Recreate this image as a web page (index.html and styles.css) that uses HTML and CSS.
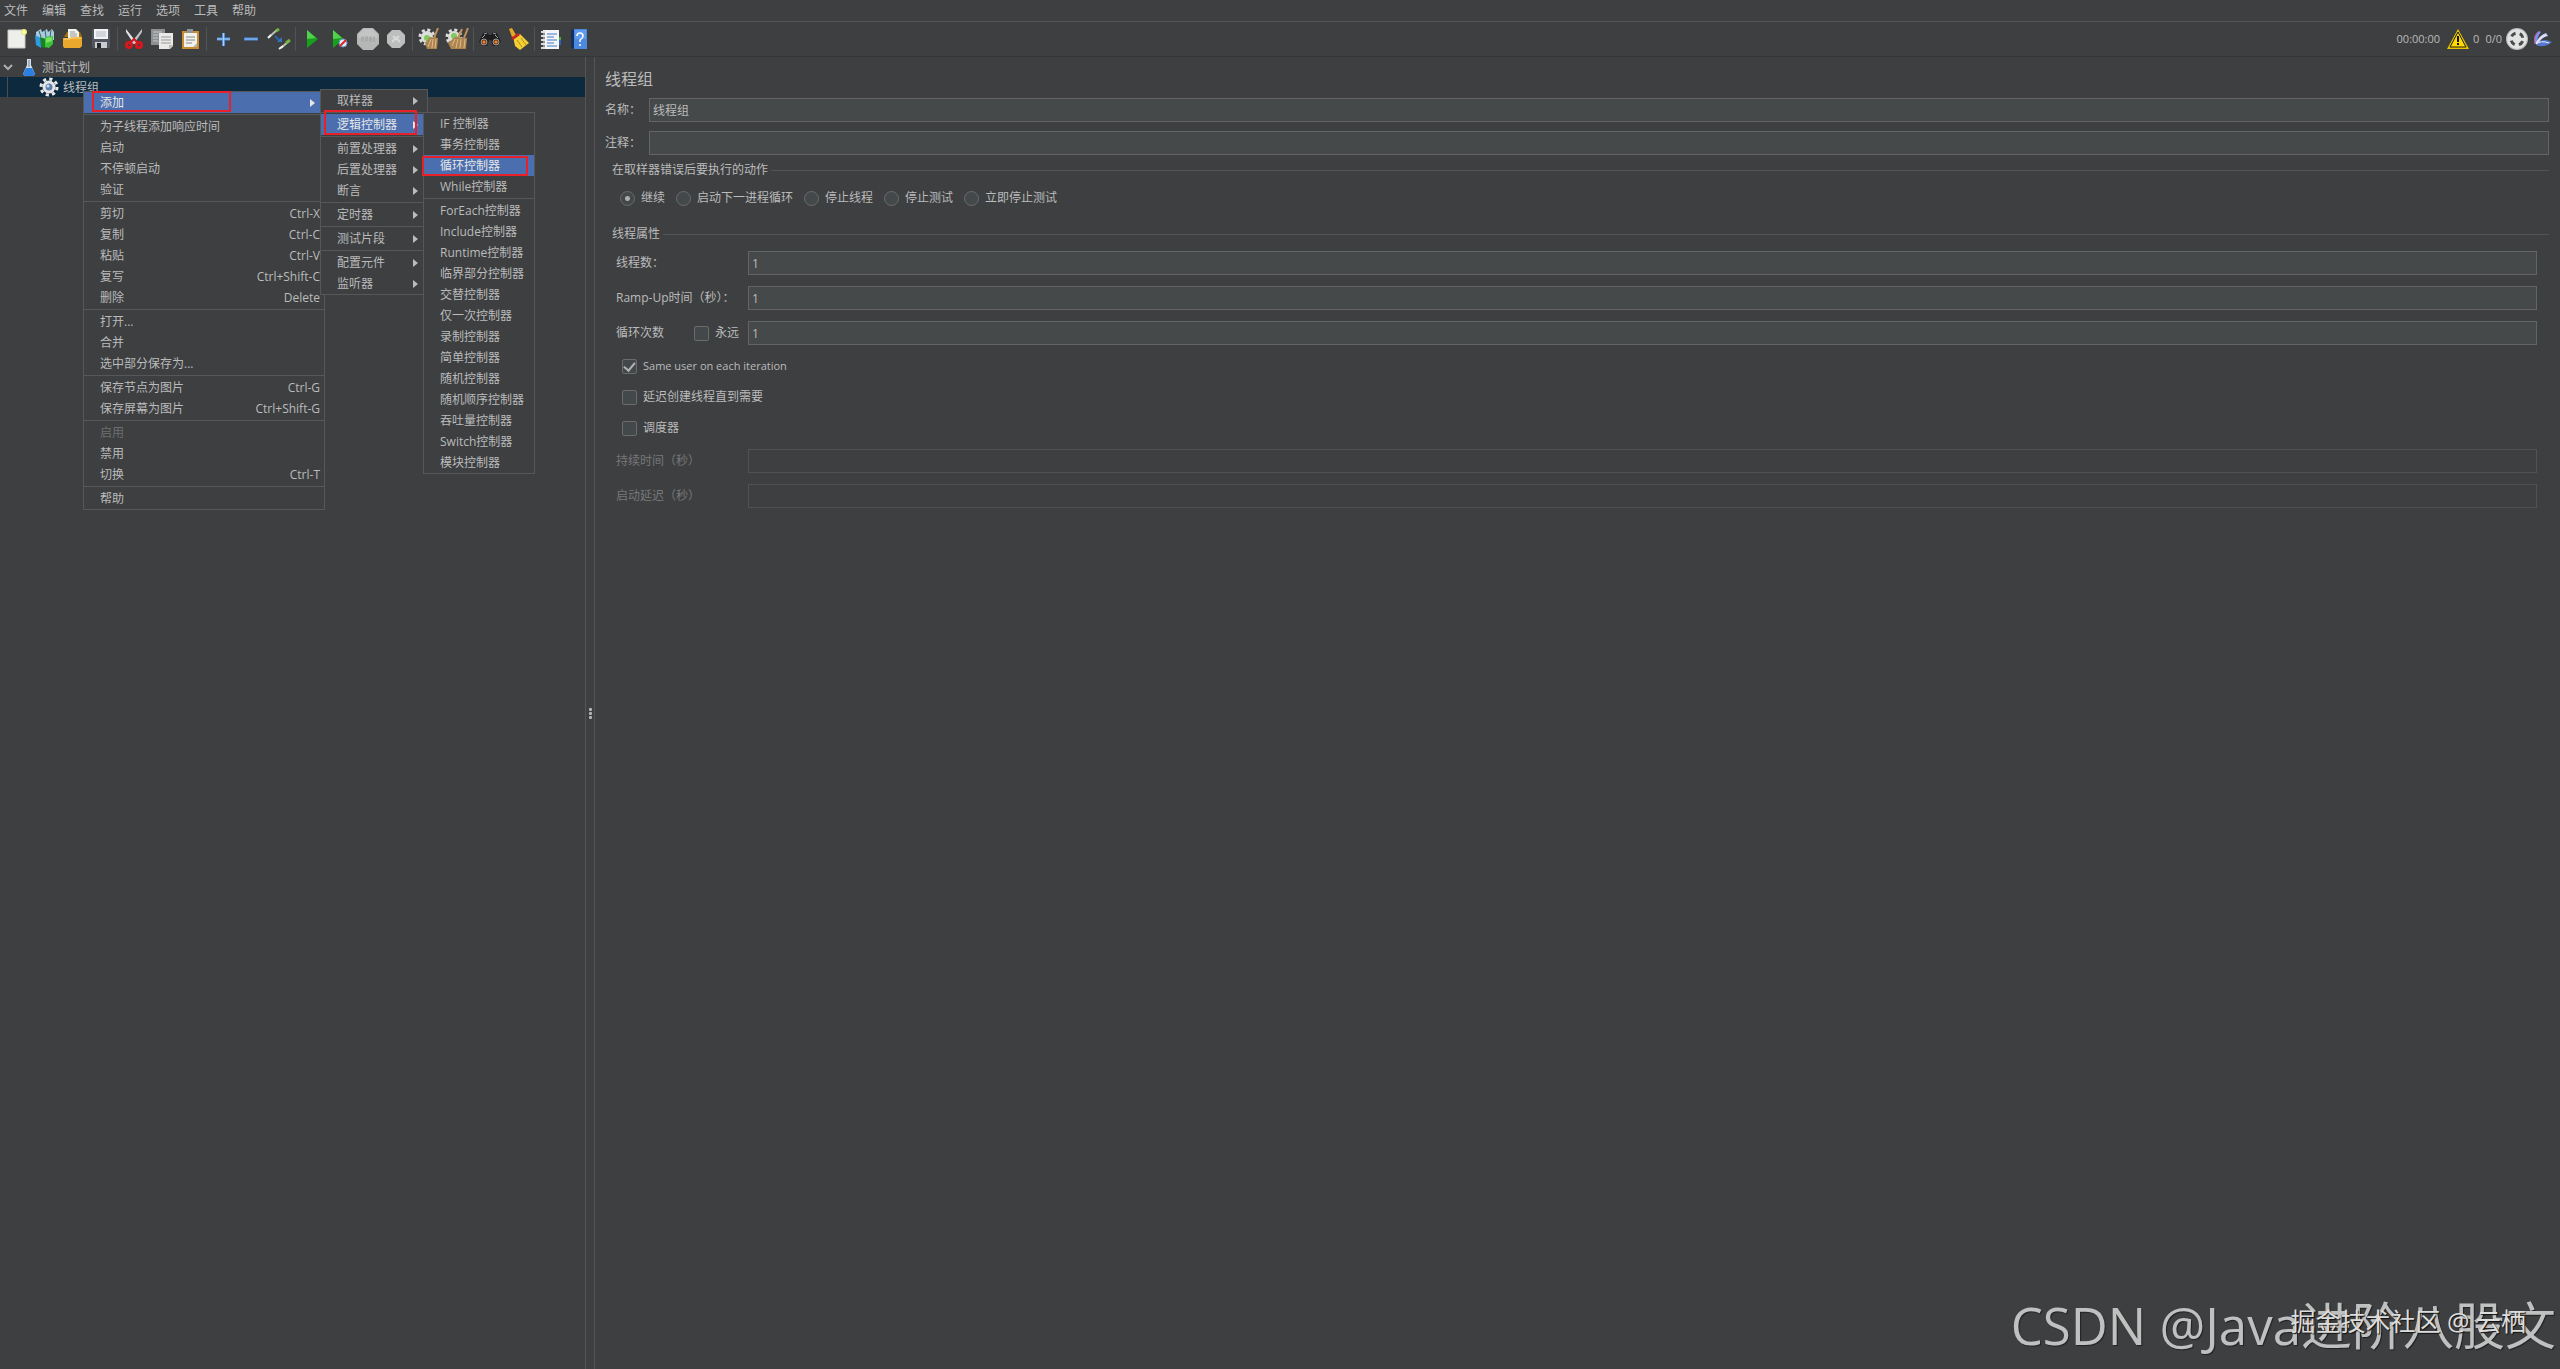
FILE: index.html
```html
<!DOCTYPE html>
<html lang="zh-CN">
<head>
    <meta charset="UTF-8">
    <title>线程组</title>
    <link rel="stylesheet" href="styles.css">
</head>
<body>
    <!-- Menu bar -->
    <nav class="menubar">
        <button>文件</button>
        <button>编辑</button>
        <button>查找</button>
        <button>运行</button>
        <button>选项</button>
        <button>工具</button>
        <button>帮助</button>
    </nav>

    <!-- Toolbar -->
    <header class="toolbar">
        <button class="tool"><svg width="22" height="22" viewBox="0 0 22 22"><path d="M2 2h17v18H2z" fill="#eeeeea" stroke="#c9c9c4"/><circle cx="18" cy="4" r="3" fill="#e6ef7c"/><circle cx="18" cy="4" r="1.5" fill="#fbffc0"/></svg></button>
        <button class="tool"><svg width="22" height="22" viewBox="0 0 22 22"><path d="M2 4l5-3 1 3 5-3 1 3 4-3 2 3v8H2z" fill="#a9cbdc"/><path d="M5 3l2 6M11 2l1 7M17 2l-1 7" stroke="#38637a"/><path d="M1 7l6 3v10l-5-3z" fill="#2e9be0"/><path d="M6 9l6 2v9l-5-1z" fill="#1b7f26"/><path d="M11 9l8-1v8l-4 4-4-1z" fill="#3cc238"/><path d="M12 10l6-1v4l-6 2z" fill="#7be45f"/></svg></button>
        <button class="tool"><svg width="22" height="22" viewBox="0 0 22 22"><path d="M2 9l3-5h13l2 5z" fill="#a8700f"/><path d="M6 1h8l3 3v7H6z" fill="#f2f2ee"/><path d="M8 4h5M8 6h7M8 8h7" stroke="#999"/><path d="M1 10h7l2-1h10v9l-2 2H2l-1-2z" fill="#eaa92c"/><path d="M2 11h6l2-1h9" stroke="#ffd677" fill="none"/></svg></button>
        <button class="tool"><svg width="22" height="22" viewBox="0 0 22 22"><path d="M2 1h18v19H3l-1-1z" fill="#52565e"/><path d="M4 1h14v10H4z" fill="#f2f3f5"/><path d="M6 4h10M6 6h10M6 8h10" stroke="#b6b9c0"/><path d="M5 14h12v6H5z" fill="#c9ccd1"/><path d="M7 15h4v5H7z" fill="#24262a"/></svg></button>
        <span class="sep"></span>
        <button class="tool"><svg width="22" height="22" viewBox="0 0 22 22"><path d="M3 1l11 14-3 1L3 4z" fill="#e3e5e6"/><path d="M19 1L8 15l3 1 8-12z" fill="#bfc4c6"/><circle cx="6" cy="17" r="2.500" fill="none" stroke="#d9161c" stroke-width="3"/><circle cx="16" cy="17" r="2.500" fill="none" stroke="#d9161c" stroke-width="3"/><path d="M8 14l3-3 3 3" stroke="#d9161c" stroke-width="2" fill="none"/></svg></button>
        <button class="tool"><svg width="24" height="22" viewBox="0 0 24 22"><path d="M1 1h14v16H1z" fill="#8d9092"/><path d="M3 4h9M3 7h5M3 10h5M3 13h5" stroke="#c6c8c9"/><path d="M9 5h14v13l-3 3H9z" fill="#e9eae8"/><path d="M11 9h10M11 12h10M11 15h10" stroke="#999"/><path d="M23 17h-4v4z" fill="#b7b7b4"/></svg></button>
        <button class="tool"><svg width="22" height="22" viewBox="0 0 22 22"><path d="M3 3h17v18H3z" fill="#c98d2f"/><path d="M5 5h13v14H5z" fill="#f1f1ed"/><path d="M8 1h6v4H8z" fill="#8f9498"/><path d="M7 9h9M7 12h9M7 15h6" stroke="#888"/><path d="M14 19l4-4v4z" fill="#b9b9b4"/></svg></button>
        <span class="sep"></span>
        <button class="tool"><svg width="22" height="22" viewBox="0 0 22 22"><path d="M5 11h13M11.500 5v13" stroke="#4f8fdd" stroke-width="3"/><path d="M5 11h13M11.500 5v13" stroke="#a9d0fa"/></svg></button>
        <button class="tool"><svg width="22" height="22" viewBox="0 0 22 22"><path d="M4 11h14" stroke="#4f8fdd" stroke-width="3"/><path d="M5 11h12" stroke="#8dbcf2"/></svg></button>
        <button class="tool"><svg width="24" height="22" viewBox="0 0 24 22"><path d="M2 9l8-7M14 20l8-7" stroke="#b9c5ae" stroke-width="2"/><path d="M9 3l3-2M19 15l4-3" stroke="#72b542" stroke-width="3"/><path d="M1 10l3-3M12 21l4-3" stroke="#f0f0ec" stroke-width="2"/><path d="M8 8l5 5" stroke="#2965b0" stroke-width="2"/><path d="M15 9v5h-5z" fill="#3474c4"/></svg></button>
        <span class="sep"></span>
        <button class="tool"><svg width="22" height="22" viewBox="0 0 22 22"><path d="M6 2l11 9-11 9z" fill="#16a01b"/><path d="M6 2l9 8-9 1z" fill="#53d04e"/></svg></button>
        <button class="tool"><svg width="22" height="22" viewBox="0 0 22 22"><path d="M4 2l11 9-11 9z" fill="#16a01b"/><path d="M4 2l9 8-9 1z" fill="#53d04e"/><circle cx="14" cy="15" r="4" fill="#dfeafa" stroke="#6a93c9"/><path d="M11 18l6-6" stroke="#d22" stroke-width="2"/></svg></button>
        <button class="tool"><svg width="24" height="24" viewBox="0 0 24 24"><path d="M7 1h10l6 6v10l-6 6H7l-6-6V7z" fill="#b5b6b6"/><path d="M8 2h8l5 5v4H3V7z" fill="#c3c4c4"/><path d="M5 12h14" stroke="#a9aaaa" stroke-width="5" stroke-dasharray="3 1"/></svg></button>
        <button class="tool"><svg width="22" height="22" viewBox="0 0 22 22"><path d="M7 2h8l5 5v8l-5 5H7l-5-5V7z" fill="#bdbebe"/><path d="M7 14l4-4 4 4M8 8l3 3 3-3" stroke="#d8d8d8" stroke-width="2" fill="none"/></svg></button>
        <span class="sep"></span>
        <button class="tool"><svg width="22" height="22" viewBox="0 0 22 22"><circle cx="9" cy="9" r="6" fill="#dcdedb"/><circle cx="9" cy="9" r="7" fill="none" stroke="#dcdedb" stroke-width="3" stroke-dasharray="3 2.500"/><circle cx="9" cy="10" r="3" fill="#7fca5c"/><path d="M20 0l-4 10" stroke="#bd925b" stroke-width="2"/><path d="M12 9l8 1-1 11H9L7 15z" fill="#ad8351"/><path d="M13 11l-3 8M15 11l-1 9M18 11l-1 9" stroke="#e0bd85"/></svg></button>
        <button class="tool"><svg width="24" height="22" viewBox="0 0 24 22"><circle cx="9" cy="9" r="6" fill="#dcdedb"/><circle cx="9" cy="9" r="7" fill="none" stroke="#dcdedb" stroke-width="3" stroke-dasharray="3 2.500"/><circle cx="9" cy="8" r="3" fill="#7fca5c"/><path d="M17 1l-4 9M23 0l-4 10" stroke="#bd925b" stroke-width="2"/><path d="M10 9l12 1-1 11H6L3 15z" fill="#ad8351"/><path d="M10 11l-3 7M13 11l-2 9M16 11l-1 9M20 11l-1 9" stroke="#e0bd85"/></svg></button>
        <span class="sep"></span>
        <button class="tool"><svg width="24" height="22" viewBox="0 0 24 22"><path d="M5 5l4-1 2 3h2l2-3 4 1 4 9-4 4h-4l-2-6h-2l-2 6H5l-4-4z" fill="#1e1e20"/><path d="M6 6l3-1M15 5l3 1M4 10l3-3M17 7l3 3" stroke="#9aa0a5"/><circle cx="6" cy="14" r="3" fill="#7a3c18" stroke="#999"/><circle cx="18" cy="14" r="3" fill="#7a3c18" stroke="#999"/><circle cx="6" cy="14" r="1.500" fill="#e98434"/><circle cx="18" cy="14" r="1.500" fill="#e98434"/></svg></button>
        <button class="tool"><svg width="24" height="24" viewBox="0 0 24 24"><path d="M3 2l3-1 4 7-4 2z" fill="#e5a824"/><path d="M7 9l7-2 9 9-9 7-5-4z" fill="#f2cf35"/><path d="M5 11l7-5 2 2-7 5z" fill="#c62420"/><path d="M11 13l5 7M15 11l5 7" stroke="#b98a0f"/></svg></button>
        <span class="sep"></span>
        <button class="tool"><svg width="24" height="22" viewBox="0 0 24 22"><path d="M16 9h6v6h-6z" fill="#3dad3a"/><path d="M18 12h4v5h-4z" fill="#2b63c4"/><path d="M4 2h16v19H4z" fill="#f5f5f5"/><path d="M8 6h10M8 9h7M8 12h10M8 15h7M8 18h10" stroke="#3d78c9"/><path d="M5 3v17" stroke="#333"/><path d="M2 4h4M2 8h4M2 12h4M2 16h4M2 20h4" stroke="#ddd" stroke-width="2"/></svg></button>
        <button class="tool"><svg width="22" height="22" viewBox="0 0 22 22"><path d="M3 2l3-1v20l-3-2z" fill="#15315f"/><path d="M6 1h13v20H6z" fill="#4c8ae2"/><path d="M7 2h11v9H7z" fill="#5e9aed"/><path d="M9 8q0-3 3-3t3 3q0 2-3 4v2M12 16v2" stroke="#fff" fill="none" stroke-width="1.500"/></svg></button>

        <div class="status">
            <span class="timer">00:00:00</span>
            <svg width="24" height="22" viewBox="0 0 24 22"><path d="M12 1l11 20H1z" fill="#e9c500"/><path d="M12 4l8 15H4z" fill="#ffd905" stroke="#1d1c10" stroke-linejoin="round"/><path d="M12 8v6M12 15v2" stroke="#111" stroke-width="2"/></svg>
            <span class="errors">0</span>
            <span>0/0</span>
            <svg width="24" height="24" viewBox="0 0 24 24"><circle cx="12" cy="12" r="11" fill="#b9bab9"/><circle cx="12" cy="12" r="10" fill="#e2e2e2"/><circle cx="12" cy="12" r="6" fill="none" stroke="#484b4c" stroke-width="3" stroke-dasharray="5 4.424" stroke-dashoffset="-2.200"/></svg>
            <svg width="22" height="22" viewBox="0 0 22 22"><path d="M3 16Q0 7 7 3l2 1q-5 6-3 12z" fill="#7794e8"/><path d="M4 16Q6 8 14 5l2 3q-8 2-9 8z" fill="#c6d1f5"/><path d="M4 17q6-8 16-3-5 5-13 4z" fill="#5478cf"/><path d="M4 16q5-4 13-1M4 15q3-6 10-8" stroke="#eef" fill="none"/><path d="M6 4q-5 5-3 12" stroke="#d34f92" fill="none"/></svg>
        </div>
    </header>

    <div class="workspace">
        <!-- Test plan tree -->
        <aside class="tree">
            <div class="node">
                <svg class="chevron" width="12" height="12" viewBox="0 0 12 12"><path d="M2 4l4 4 4-4" stroke="#adadad" stroke-width="2" fill="none"/></svg>
                <svg class="flask" width="14" height="18" viewBox="0 0 14 18"><path d="M5 1h4v6l4 9-2 2H3l-2-2 4-9z" fill="#d3e0ed"/><path d="M4 10h6l3 6-2 2H3l-2-2z" fill="#2b7fe0"/><path d="M7 2v7" stroke="#6f8092"/></svg>
                <span>测试计划</span>
            </div>
            <div class="node child selected">
                <svg width="20" height="20" viewBox="0 0 20 20"><circle cx="10" cy="10" r="8" fill="none" stroke="#e6e7e8" stroke-width="3" stroke-dasharray="3.200 3.083"/><circle cx="10" cy="10" r="5" fill="#5f7fae" stroke="#e6e7e8" stroke-width="3"/><circle cx="9" cy="9" r="1.500" fill="#cfe0f5"/></svg>
                <span>线程组</span>
            </div>
        </aside>

        <div class="splitter"><i></i><i></i><i></i></div>

        <!-- Thread group settings -->
        <main class="panel">
            <h1>线程组</h1>
            <div class="row">
                <label for="name">名称：</label>
                <input type="text" id="name" value="线程组">
            </div>
            <div class="row">
                <label for="comment">注释：</label>
                <input type="text" id="comment">
            </div>

            <section class="group">
                <h2>在取样器错误后要执行的动作</h2>
                <div class="radios">
                    <label><input type="radio" name="onerror" checked>继续</label>
                    <label><input type="radio" name="onerror">启动下一进程循环</label>
                    <label><input type="radio" name="onerror">停止线程</label>
                    <label><input type="radio" name="onerror">停止测试</label>
                    <label><input type="radio" name="onerror">立即停止测试</label>
                </div>
            </section>

            <section class="group">
                <h2>线程属性</h2>
                <div class="fields">
                    <div class="field">
                        <label for="threads">线程数：</label>
                        <input type="text" id="threads" value="1">
                    </div>
                    <div class="field">
                        <label for="ramp">Ramp-Up时间（秒）：</label>
                        <input type="text" id="ramp" value="1">
                    </div>
                    <div class="field">
                        <div class="loop">
                            <label for="loops">循环次数</label>
                            <label class="check"><input type="checkbox">永远</label>
                        </div>
                        <input type="text" id="loops" value="1">
                    </div>
                    <div class="checks">
                        <label class="check small"><input type="checkbox" checked>Same user on each iteration</label>
                        <label class="check"><input type="checkbox">延迟创建线程直到需要</label>
                        <label class="check"><input type="checkbox">调度器</label>
                    </div>
                    <div class="field off">
                        <label for="duration">持续时间（秒）</label>
                        <input type="text" id="duration" disabled>
                    </div>
                    <div class="field off">
                        <label for="delay">启动延迟（秒）</label>
                        <input type="text" id="delay" disabled>
                    </div>
                </div>
            </section>
        </main>
    </div>

    <!-- Context menu -->
    <div class="menu menu-main">
        <button class="active">添加<i class="arrow"></i></button>
        <hr>
        <button>为子线程添加响应时间</button>
        <button>启动</button>
        <button>不停顿启动</button>
        <button>验证</button>
        <hr>
        <button>剪切<kbd>Ctrl-X</kbd></button>
        <button>复制<kbd>Ctrl-C</kbd></button>
        <button>粘贴<kbd>Ctrl-V</kbd></button>
        <button>复写<kbd>Ctrl+Shift-C</kbd></button>
        <button>删除<kbd>Delete</kbd></button>
        <hr>
        <button>打开...</button>
        <button>合并</button>
        <button>选中部分保存为...</button>
        <hr>
        <button>保存节点为图片<kbd>Ctrl-G</kbd></button>
        <button>保存屏幕为图片<kbd>Ctrl+Shift-G</kbd></button>
        <hr>
        <button disabled>启用</button>
        <button>禁用</button>
        <button>切换<kbd>Ctrl-T</kbd></button>
        <hr>
        <button>帮助</button>
    </div>

    <div class="menu menu-add">
        <button>取样器<i class="arrow"></i></button>
        <hr>
        <button class="active">逻辑控制器<i class="arrow"></i></button>
        <hr>
        <button>前置处理器<i class="arrow"></i></button>
        <button>后置处理器<i class="arrow"></i></button>
        <button>断言<i class="arrow"></i></button>
        <hr>
        <button>定时器<i class="arrow"></i></button>
        <hr>
        <button>测试片段<i class="arrow"></i></button>
        <hr>
        <button>配置元件<i class="arrow"></i></button>
        <button>监听器<i class="arrow"></i></button>
    </div>

    <div class="menu menu-logic">
        <button>IF 控制器</button>
        <button>事务控制器</button>
        <button class="active">循环控制器</button>
        <button>While控制器</button>
        <hr>
        <button>ForEach控制器</button>
        <button>Include控制器</button>
        <button>Runtime控制器</button>
        <button>临界部分控制器</button>
        <button>交替控制器</button>
        <button>仅一次控制器</button>
        <button>录制控制器</button>
        <button>简单控制器</button>
        <button>随机控制器</button>
        <button>随机顺序控制器</button>
        <button>吞吐量控制器</button>
        <button>Switch控制器</button>
        <button>模块控制器</button>
    </div>

    <!-- Red highlight boxes -->
    <div class="mark mark-add"></div>
    <div class="mark mark-logic"></div>
    <div class="mark mark-loop"></div>

    <!-- Watermarks -->
    <div class="watermark csdn">CSDN @Java进阶八股文</div>
    <div class="watermark juejin">掘金技术社区 @ 云栖</div>
</body>
</html>
```

FILE: styles.css
```css
* {
    box-sizing: border-box;
}

body {
    margin: 0;
    height: 100vh;
    display: flex;
    flex-direction: column;
    overflow: hidden;
    position: relative;
    background: #3d3f41;
    color: #bbbbbb;
    font-family: "Open Sans", "Noto Sans CJK SC", sans-serif;
    font-size: 12px;
    line-height: 20px;
}

button,
input {
    font: inherit;
    color: inherit;
    margin: 0;
}

button {
    padding: 0;
    border: none;
    background: none;
}

svg {
    display: block;
    flex: none;
}

/* Menu bar */
.menubar {
    display: flex;
    gap: 14px;
    height: 22px;
    padding: 1px 4px 0;
    border-bottom: 1px solid #555555;
}

/* Toolbar */
.toolbar {
    display: flex;
    align-items: center;
    height: 35px;
    padding: 0 6px 0 3px;
    border-bottom: 1px solid #343638;
}

.tool {
    width: 28px;
    display: flex;
    justify-content: center;
}

.sep {
    width: 1px;
    height: 24px;
    margin: 0 2px;
    background: #515355;
}

.status {
    display: flex;
    align-items: center;
    gap: 3px;
    margin-left: auto;
    font-size: 11px;
}

.timer,
.errors {
    margin-right: 3px;
}

/* Tree */
.workspace {
    flex: 1;
    display: flex;
    min-height: 0;
}

.tree {
    flex: 0 0 585px;
}

.node {
    display: flex;
    align-items: center;
    height: 20px;
    padding-left: 2px;
}

.node span {
    padding-top: 2px;
}

.chevron {
    margin-right: 8px;
}

.flask {
    margin-right: 6px;
}

.child {
    margin-left: 7px;
    padding-left: 31px;
    gap: 4px;
    border-left: 1px solid #4c5052;
}

.selected {
    background: #0d293e;
    box-shadow: -7px 0 #0d293e;
}

.splitter {
    flex: 0 0 10px;
    display: flex;
    flex-direction: column;
    align-items: center;
    justify-content: center;
    gap: 1px;
    border: solid #555555;
    border-width: 0 1px;
}

.splitter i {
    width: 3px;
    height: 3px;
    border-radius: 1px;
    background: #b4b4b4;
}

/* Panel */
.panel {
    flex: 1;
    min-width: 0;
    padding: 10px 11px 0 10px;
}

h1 {
    margin: 0 0 7px;
    font-size: 16px;
    font-weight: 400;
    line-height: 24px;
}

.row {
    display: flex;
    align-items: center;
    margin-bottom: 9px;
}

.row label {
    width: 44px;
}

input[type="text"] {
    flex: 1;
    min-width: 0;
    height: 24px;
    padding: 0 3px;
    border: 1px solid #646464;
    background: #45494a;
}

input[type="text"]:disabled {
    border-color: #505254;
    background: none;
}

h2 {
    display: flex;
    align-items: center;
    gap: 3px;
    margin: 0;
    padding-left: 7px;
    font-size: 12px;
    font-weight: 400;
    line-height: 20px;
}

h2::after {
    content: "";
    flex: 1;
    height: 1px;
    background: #515355;
}

.group {
    margin-top: -4px;
}

.radios {
    display: flex;
    gap: 11px;
    padding: 8px 15px 16px;
}

.radios label,
.check {
    display: flex;
    align-items: center;
    gap: 6px;
}

input[type="radio"],
input[type="checkbox"] {
    appearance: none;
    width: 15px;
    height: 15px;
    border: 1px solid #6b6b6b;
    background: #43494a;
}

input[type="radio"] {
    border-radius: 50%;
}

input[type="radio"]:checked {
    background: radial-gradient(circle, #adadad 2px, #43494a 3px);
}

input[type="checkbox"] {
    border-radius: 2px;
    display: grid;
    place-items: center;
}

input[type="checkbox"]:checked::after {
    content: "";
    width: 5px;
    height: 9px;
    margin-bottom: 3px;
    border: solid #b4b4b4;
    border-width: 0 2px 2px 0;
    transform: rotate(40deg);
}

.group + .group {
    margin-top: 0;
}

.fields {
    display: flex;
    flex-direction: column;
    gap: 11px;
    padding: 7px 12px 0 11px;
}

.field {
    display: flex;
    align-items: center;
}

.field > :first-child {
    width: 132px;
}

.loop {
    display: flex;
    justify-content: space-between;
    padding-right: 9px;
}

.checks {
    display: flex;
    flex-direction: column;
    gap: 11px;
    padding: 0 6px;
}

.small {
    font-size: 11px;
}

.off {
    color: #777777;
}

/* Popup menus */
.menu {
    position: absolute;
    border: 1px solid #555759;
    background: #3d3f41;
}

.menu button {
    display: flex;
    align-items: center;
    width: 100%;
    height: 21px;
    padding: 0 4px 0 16px;
    white-space: nowrap;
}

.menu button:disabled {
    color: #6e6e6e;
}

.menu .active {
    background: #4b6eaf;
    color: #e6e6e6;
}

.menu hr {
    height: 1px;
    margin: 1px 0;
    border: none;
    background: #555759;
}

.menu kbd {
    margin-left: auto;
    font: inherit;
}

.arrow {
    margin: 0 5px 0 auto;
    border: solid transparent;
    border-width: 4px 0 4px 5px;
    border-left-color: currentColor;
}

.menu-main {
    left: 83px;
    top: 91px;
    width: 242px;
}

.menu-add {
    left: 320px;
    top: 89px;
    width: 108px;
}

.menu-logic {
    left: 423px;
    top: 112px;
    width: 112px;
}

.mark {
    position: absolute;
    border: 2px solid #e8202a;
}

.mark-add {
    left: 92px;
    top: 91px;
    width: 139px;
    height: 21px;
}

.mark-logic {
    left: 324px;
    top: 110px;
    width: 93px;
    height: 25px;
}

.mark-loop {
    left: 422px;
    top: 156px;
    width: 106px;
    height: 20px;
}

/* Watermarks */
.watermark {
    position: absolute;
    white-space: nowrap;
}

.csdn {
    right: 4px;
    bottom: 14px;
    color: #bfc0c0;
    font-size: 51px;
    line-height: 60px;
    text-shadow: 1px 1px 1px #222222;
}

.juejin {
    right: 34px;
    bottom: 33px;
    color: #dddddd;
    font-size: 25px;
    line-height: 30px;
    text-shadow: 1px 1px 1px #111111;
}
```
